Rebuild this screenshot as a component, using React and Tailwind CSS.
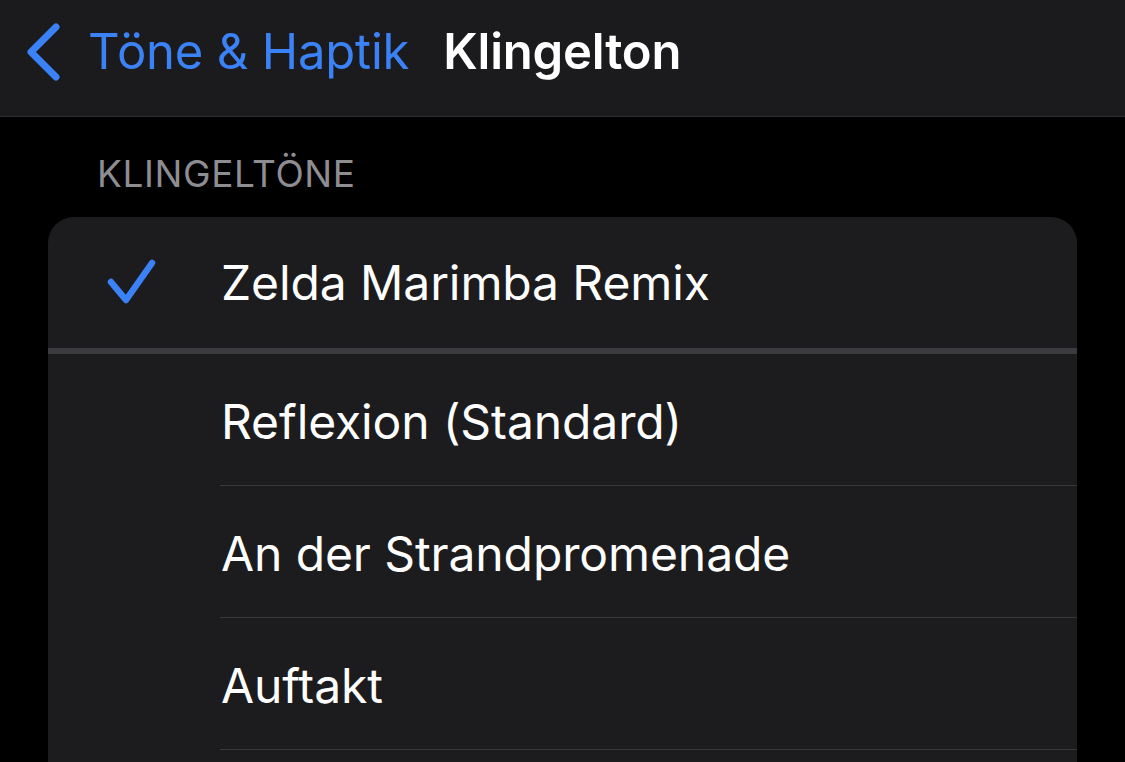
import React from 'react';

const tones = [
    { name: 'Zelda Marimba Remix', selected: true },
    { name: 'Reflexion (Standard)' },
    { name: 'An der Strandpromenade' },
    { name: 'Auftakt' },
];

function Chevron() {
    return (
        <svg width="40" height="60" viewBox="0 0 40 60" fill="none" stroke="currentColor" strokeWidth="7" strokeLinecap="round" strokeLinejoin="round">
            <path d="M32 6 L7 31 L32 56" />
        </svg>
    );
}

function Check() {
    return (
        <svg width="52" height="50" viewBox="0 0 52 50" fill="none" stroke="currentColor" strokeWidth="6.5" strokeLinecap="round" strokeLinejoin="round">
            <path d="M5 24 L20 42 L46 5" />
        </svg>
    );
}

export default function App() {
    return (
        <div className="h-screen w-full overflow-hidden bg-black text-white" style={{ fontFamily: 'Inter, "Noto Sans", sans-serif' }}>
            {/* nav bar */}
            <div className="h-[117px] bg-[#1b1b1d] border-b border-[#2c2c2e] flex items-center pl-[24px] pb-[14px]">
                <span className="text-[#3b82f6] flex items-center">
                    <Chevron />
                </span>
                <span className="ml-[24px] text-[49px] leading-none text-[#3b82f6] tracking-[-0.2px]">Töne &amp; Haptik</span>
                <span className="ml-[34px] text-[49px] leading-none font-semibold tracking-[-0.2px]">Klingelton</span>
            </div>

            {/* section header */}
            <div className="pt-[35px] pb-[21px] pl-[97px] text-[37px] leading-[44px] text-[#8d8d92] tracking-[0.6px]">
                KLINGELTÖNE
            </div>

            {/* list */}
            <div className="mx-[48px] w-[1029px] h-[600px] rounded-t-[26px] bg-[#1c1c1e] overflow-hidden">
                {tones.map((t, i) => (
                    <div key={t.name}>
                        <div className="h-[131px] flex items-center">
                            <div className="w-[173px] pl-[58px] text-[#3b82f6] flex items-center">
                                {t.selected && <Check />}
                            </div>
                            <span className={`text-[48px] leading-none tracking-[-0.1px] ${i === 0 ? 'pt-[1px]' : 'pt-[5px]'}`}>{t.name}</span>
                        </div>
                        {i === 0 ? (
                            <div className="h-[6px] bg-[#3c3c40]" />
                        ) : (
                            <div className="ml-[172px] h-px bg-[#38383b]" />
                        )}
                    </div>
                ))}
            </div>
        </div>
    );
}
